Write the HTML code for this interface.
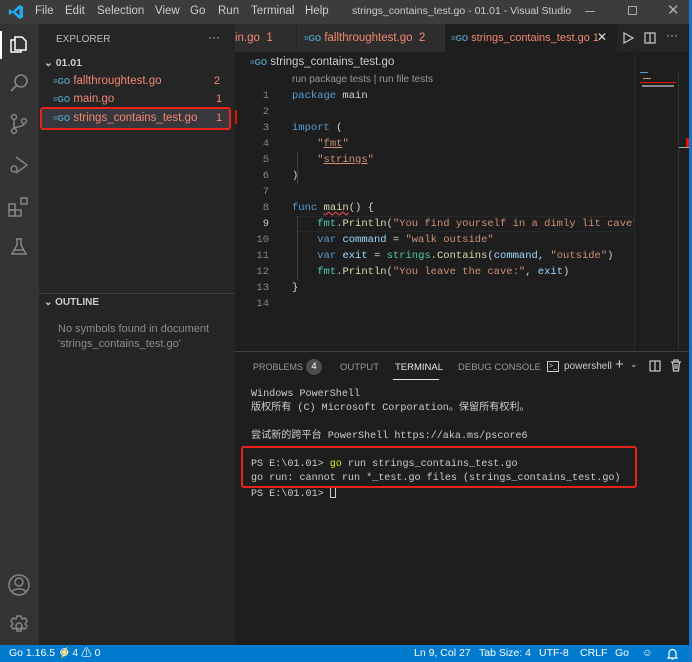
<!DOCTYPE html>
<html><head><meta charset="utf-8"><style>
*{margin:0;padding:0;box-sizing:border-box}
body{width:692px;height:662px;overflow:hidden;background:#1e1e1e;font-family:"Liberation Sans","Noto Sans CJK SC",sans-serif;font-size:11px;color:#ccc;position:relative}
.a{position:absolute}
.mono{font-family:"Liberation Mono","Noto Sans CJK SC",monospace}
.code div{height:16px;line-height:16px;white-space:pre}
.kw{color:#569cd6}.st{color:#ce9178}.fn{color:#dcdcaa}.vr{color:#9cdcfe}.ty{color:#4ec9b0}
.gi{color:#519aba;font-size:8px;font-weight:bold}
.m{position:absolute;top:5px;color:#ccc;font-size:11.5px}
</style></head><body>
<!-- title bar -->
<div class="a" style="left:0;top:0;width:689px;height:24px;background:#3c3c3c"></div>
<svg class="a" style="left:8px;top:4px" width="16" height="16" viewBox="0 0 16 16"><path d="M11.5 1 L15 2.6 V13.4 L11.5 15 L4.5 8.6 L1.8 10.8 L0.8 10.2 V5.8 L1.8 5.2 L4.5 7.4 Z M11.5 4.6 L7.4 8 L11.5 11.4 Z" fill="#23a9f2"/></svg>
<span class="m" style="left:35px">File</span><span class="m" style="left:65px">Edit</span><span class="m" style="left:97px">Selection</span><span class="m" style="left:155px">View</span><span class="m" style="left:190px">Go</span><span class="m" style="left:218px">Run</span><span class="m" style="left:251px">Terminal</span><span class="m" style="left:305px">Help</span>
<div class="a" style="left:352px;top:5px;width:222px;overflow:hidden;white-space:nowrap;color:#ccc;font-size:10.5px">strings_contains_test.go - 01.01 - Visual Studio C...</div>
<div class="a" style="left:585px;top:11px;width:10px;height:1px;background:#aaa"></div>
<div class="a" style="left:628px;top:6px;width:9px;height:9px;border:1px solid #aaa"></div>
<div class="a" style="left:667px;top:1px;color:#aaa;font-size:15px">✕</div>
<div class="a" style="left:689px;top:0;width:3px;height:662px;background:#1a74c8"></div>
<!-- activity bar -->
<div class="a" style="left:0;top:24px;width:39px;height:621px;background:#333"></div>
<div class="a" style="left:0;top:31px;width:2px;height:28px;background:#fff"></div>
<svg class="a" style="left:8px;top:33px" width="22" height="22" viewBox="0 0 22 22" fill="none" stroke="#fff" stroke-width="1.5"><path d="M7 4h7l4 4v9H7z"/><path d="M7 7H3v12h10v-2"/></svg>
<svg class="a" style="left:8px;top:72px" width="22" height="22" viewBox="0 0 22 22" fill="none" stroke="#858585" stroke-width="1.6"><circle cx="13" cy="9" r="6"/><path d="M9 13L3 19"/></svg>
<svg class="a" style="left:8px;top:112px" width="22" height="24" viewBox="0 0 22 24" fill="none" stroke="#858585" stroke-width="1.5"><circle cx="6" cy="5" r="2.5"/><circle cx="6" cy="19" r="2.5"/><circle cx="16" cy="9" r="2.5"/><path d="M6 7.5v9M16 11.5c0 4-10 3-10 5"/></svg>
<svg class="a" style="left:8px;top:154px" width="22" height="22" viewBox="0 0 22 22" fill="none" stroke="#858585" stroke-width="1.5"><path d="M8 3l11 8-11 8"/><circle cx="6" cy="15" r="3"/></svg>
<svg class="a" style="left:8px;top:196px" width="22" height="22" viewBox="0 0 22 22" fill="none" stroke="#858585" stroke-width="1.5"><rect x="1" y="8" width="6" height="6"/><rect x="1" y="14" width="6" height="6"/><rect x="7" y="14" width="6" height="6"/><rect x="13" y="2" width="6" height="6"/></svg>
<svg class="a" style="left:8px;top:236px" width="22" height="22" viewBox="0 0 22 22" fill="none" stroke="#858585" stroke-width="1.5"><path d="M8 3h6M9 3v6L4 18h14L13 9V3M6 14h10"/></svg>
<svg class="a" style="left:7px;top:573px" width="24" height="24" viewBox="0 0 24 24" fill="none" stroke="#858585" stroke-width="1.5"><circle cx="12" cy="12" r="10"/><circle cx="12" cy="9" r="4"/><path d="M5 19c2-4 12-4 14 0"/></svg>
<svg class="a" style="left:7px;top:614px" width="24" height="24" viewBox="0 0 24 24" fill="none" stroke="#858585" stroke-width="1.5"><circle cx="12" cy="12" r="3"/><path d="M10 2h4l1 3 3-1 2 3-2 3 2 2-2 3-3-1-1 3h-4l-1-3-3 1-2-3 2-2-2-3 2-3 3 1z"/></svg>
<!-- sidebar -->
<div class="a" style="left:39px;top:24px;width:196px;height:621px;background:#252526"></div>
<div class="a" style="left:56px;top:34px;font-size:10px;color:#bbb">EXPLORER</div>
<div class="a" style="left:208px;top:30px;color:#ccc;font-size:12px">···</div>
<div class="a" style="left:44px;top:57px;font-size:10.5px;color:#ccc;font-weight:bold">⌄ 01.01</div>
<div class="a" style="left:53px;top:75px;font-size:11.5px;color:#f48771"><span class="gi">=GO</span> fallthroughtest.go</div>
<div class="a" style="left:214px;top:75px;font-size:11px;color:#f48771">2</div>
<div class="a" style="left:53px;top:93px;font-size:11.5px;color:#f48771"><span class="gi">=GO</span> main.go</div>
<div class="a" style="left:216px;top:93px;font-size:11px;color:#f48771">1</div>
<div class="a" style="left:40px;top:107px;width:191px;height:23px;background:#37373d;border:2px solid #e8231a;border-radius:3px"></div>
<div class="a" style="left:53px;top:112px;font-size:11.5px;color:#f48771"><span class="gi">=GO</span> strings_contains_test.go</div>
<div class="a" style="left:216px;top:112px;font-size:11px;color:#f48771">1</div>
<div class="a" style="left:39px;top:293px;width:196px;height:1px;background:#3c3c3c"></div>
<div class="a" style="left:44px;top:297px;font-size:10px;color:#ccc;font-weight:bold">⌄ OUTLINE</div>
<div class="a" style="left:58px;top:322px;font-size:11px;color:#8b8b8b;line-height:15px">No symbols found in document<br>'strings_contains_test.go'</div>
<!-- tabs -->
<div class="a" style="left:235px;top:24px;width:454px;height:28px;background:#252526"></div>
<div class="a" style="left:235px;top:24px;width:62px;height:28px;background:#2d2d2d;border-right:1px solid #252526"></div>
<div class="a" style="left:235px;top:32px;font-size:11.5px;color:#f48771">in.go&nbsp; 1</div>
<div class="a" style="left:297px;top:24px;width:148px;height:28px;background:#2d2d2d"></div>
<div class="a" style="left:304px;top:32px;font-size:11.5px;color:#f48771"><span class="gi">=GO</span> fallthroughtest.go&nbsp; 2</div>
<div class="a" style="left:445px;top:24px;width:172px;height:28px;background:#1e1e1e"></div>
<div class="a" style="left:451px;top:32px;font-size:11px;color:#f48771;white-space:nowrap"><span class="gi">=GO</span> strings_contains_test.go 1</div>
<div class="a" style="left:597px;top:30px;color:#ddd;font-size:12px">✕</div>
<svg class="a" style="left:622px;top:32px" width="12" height="12" viewBox="0 0 12 12" fill="none" stroke="#ccc" stroke-width="1.2"><path d="M2 1l9 5-9 5z"/></svg>
<svg class="a" style="left:644px;top:32px" width="12" height="12" viewBox="0 0 12 12" fill="none" stroke="#ccc" stroke-width="1.2"><rect x="1" y="1" width="10" height="10"/><path d="M6 1v10"/></svg>
<div class="a" style="left:666px;top:28px;color:#ccc;font-size:12px">···</div>
<!-- breadcrumb -->
<div class="a" style="left:250px;top:56px;font-size:11.5px;color:#ccc"><span class="gi">=GO</span> strings_contains_test.go</div>
<div class="a" style="left:292px;top:74px;font-size:10px;color:#999">run package tests | run file tests</div>
<!-- gutter + code -->
<div class="a mono code" style="left:245px;top:88px;width:24px;text-align:right;font-size:10.5px;color:#858585">
<div>1</div><div>2</div><div>3</div><div>4</div><div>5</div><div>6</div><div>7</div><div>8</div><div style="color:#c6c6c6">9</div><div>10</div><div>11</div><div>12</div><div>13</div><div>14</div></div>
<div class="a" style="left:292px;top:216px;width:342px;height:16px;border-top:1px solid #282828;border-bottom:1px solid #282828"></div>
<div class="a" style="left:297px;top:152px;width:1px;height:32px;background:#404040"></div>
<div class="a" style="left:297px;top:216px;width:1px;height:64px;background:#404040"></div>
<div class="a" style="left:235px;top:110px;width:2px;height:14px;background:#e51400"></div>
<div class="a mono code" style="left:292px;top:88px;width:342px;overflow:hidden;font-size:10.5px;color:#d4d4d4">
<div><span class="kw">package</span> main</div>
<div> </div>
<div><span class="kw">import</span> (</div>
<div>    <span class="st">"<u>fmt</u>"</span></div>
<div>    <span class="st">"<u>strings</u>"</span></div>
<div>)</div>
<div> </div>
<div><span class="kw">func</span> <span class="fn" style="text-decoration:underline wavy #f14c4c">main</span>() {</div>
<div>    <span class="ty">fmt</span>.<span class="fn">Println</span>(<span class="st">"You find yourself in a dimly lit cave"</span></div>
<div>    <span class="kw">var</span> <span class="vr">command</span> = <span class="st">"walk outside"</span></div>
<div>    <span class="kw">var</span> <span class="vr">exit</span> = <span class="ty">strings</span>.<span class="fn">Contains</span>(<span class="vr">command</span>, <span class="st">"outside"</span>)</div>
<div>    <span class="ty">fmt</span>.<span class="fn">Println</span>(<span class="st">"You leave the cave:"</span>, <span class="vr">exit</span>)</div>
<div>}</div>
<div> </div></div>
<!-- minimap / scrollbar -->
<div class="a" style="left:634px;top:52px;width:1px;height:298px;background:#2a2a2a"></div>
<div class="a" style="left:640px;top:72px;width:8px;height:1px;background:#569cd6"></div>
<div class="a" style="left:643px;top:78px;width:8px;height:1px;background:#ce9178"></div>
<div class="a" style="left:640px;top:82px;width:36px;height:1px;background:#e51400"></div>
<div class="a" style="left:642px;top:85px;width:32px;height:2px;background:#888"></div>
<div class="a" style="left:678px;top:72px;width:1px;height:278px;background:#333"></div>
<div class="a" style="left:679px;top:147px;width:10px;height:1px;background:#aaa"></div>
<div class="a" style="left:686px;top:138px;width:3px;height:9px;background:#e51400"></div>
<!-- panel -->
<div class="a" style="left:235px;top:351px;width:454px;height:1px;background:#414141"></div>
<div class="a" style="left:253px;top:362px;font-size:9px;color:#999">PROBLEMS</div>
<div class="a" style="left:306px;top:359px;width:16px;height:16px;border-radius:8px;background:#4d4d4d;color:#fff;font-size:9.5px;text-align:center;line-height:16px">4</div>
<div class="a" style="left:340px;top:362px;font-size:9.5px;color:#999">OUTPUT</div>
<div class="a" style="left:395px;top:362px;font-size:9.5px;color:#e7e7e7">TERMINAL</div>
<div class="a" style="left:393px;top:379px;width:46px;height:1px;background:#e7e7e7"></div>
<div class="a" style="left:458px;top:362px;font-size:9.5px;color:#999">DEBUG CONSOLE</div>
<div class="a" style="left:547px;top:361px;width:12px;height:11px;border:1px solid #ccc;font-size:7px;color:#ccc;line-height:9px;padding-left:1px">&gt;_</div>
<div class="a" style="left:564px;top:361px;font-size:10px;color:#ccc">powershell</div>
<div class="a" style="left:615px;top:356px;font-size:15px;color:#ccc">+</div>
<div class="a" style="left:630px;top:359px;font-size:9px;color:#ccc">⌄</div>
<svg class="a" style="left:649px;top:360px" width="12" height="12" viewBox="0 0 12 12" fill="none" stroke="#ccc" stroke-width="1.2"><rect x="1" y="1" width="10" height="10"/><path d="M6 1v10"/></svg>
<svg class="a" style="left:670px;top:359px" width="12" height="13" viewBox="0 0 12 13" fill="none" stroke="#ccc" stroke-width="1.2"><path d="M1 3h10M4 3V1h4v2M2.5 3l1 9h5l1-9M5 5v5M7 5v5"/></svg>
<div class="a mono" style="left:251px;top:388px;font-size:10.1px;color:#ccc;line-height:14px;white-space:pre">Windows PowerShell
版权所有 (C) Microsoft Corporation。保留所有权利。

尝试新的跨平台 PowerShell https://aka.ms/pscore6

PS E:\01.01&gt; <span style="color:#e5e510">go</span> run strings_contains_test.go
go run: cannot run *_test.go files (strings_contains_test.go)
PS E:\01.01&gt; <span style="display:inline-block;width:6px;height:12px;border:1px solid #ccc;vertical-align:-2px"></span></div>
<div class="a" style="left:241px;top:446px;width:396px;height:42px;border:2px solid #e8231a;border-radius:3px"></div>
<!-- status bar -->
<div class="a" style="left:0;top:645px;width:689px;height:17px;background:#007acc;color:#fff;font-size:10.5px;line-height:17px">
<span class="a" style="left:9px">Go 1.16.5 ⚡</span>
<span class="a" style="left:59px">⊗ 4 ⚠ 0</span>
<span class="a" style="left:414px">Ln 9, Col 27</span>
<span class="a" style="left:479px">Tab Size: 4</span>
<span class="a" style="left:539px">UTF-8</span>
<span class="a" style="left:580px">CRLF</span>
<span class="a" style="left:615px">Go</span>
<span class="a" style="left:642px">☺</span>
<svg class="a" style="left:667px;top:3px" width="11" height="12" viewBox="0 0 11 12" fill="none" stroke="#fff" stroke-width="1.2"><path d="M2 9V5a3.5 3.5 0 0 1 7 0v4l1 1H1zM4.5 11h2"/></svg>
</div>
</body></html>
